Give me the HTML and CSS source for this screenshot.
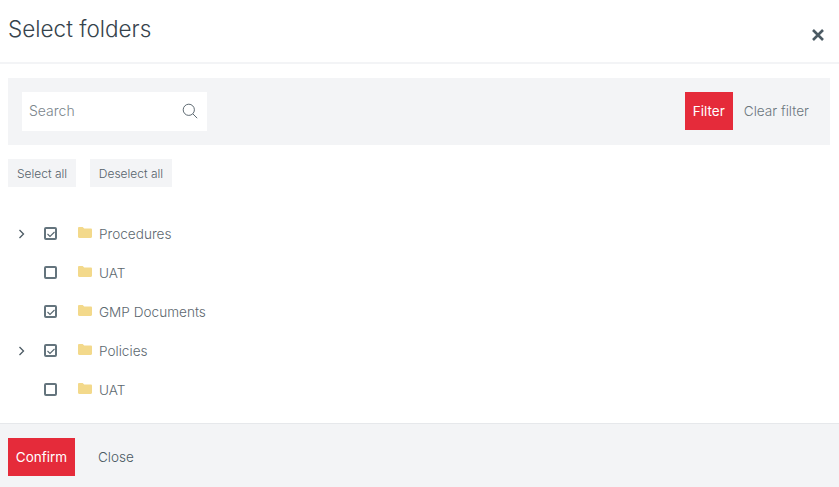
FILE: index.html
```html
<!DOCTYPE html>
<html lang="en">
<head>
    <meta charset="UTF-8">
    <meta name="viewport" content="width=device-width, initial-scale=1.0">
    <title>Select folders</title>
    <link rel="stylesheet" href="styles.css">
</head>
<body>
    <div class="modal">
        <header class="modal-header">
            <h2 class="modal-title">Select folders</h2>
            <button class="close-x" aria-label="Close">
                <svg width="12" height="12" viewBox="0 0 12 12"><path d="M1 1l10 10M11 1L1 11" stroke="#4b5a63" stroke-width="2.6" fill="none"/></svg>
            </button>
        </header>

        <div class="filter-bar">
            <div class="search-box">
                <span class="search-text">Search</span>
                <svg width="16" height="16" viewBox="0 0 16 16" fill="none" stroke="#5f6b73" stroke-width="1"><circle cx="6.8" cy="6.8" r="5.6"/><path d="M10.9 10.9l4.3 4.3"/></svg>
            </div>
            <div class="filter-actions">
                <button class="button red filter-btn">Filter</button>
                <button class="button plain clear-btn">Clear filter</button>
            </div>
        </div>

        <div class="select-buttons">
            <button class="small-btn select-btn">Select all</button>
            <button class="small-btn deselect-btn">Deselect all</button>
        </div>

        <ul class="tree">
            <li class="tree-row">
                <span class="arrow"><svg width="8" height="10" viewBox="0 0 8 10"><path d="M1.5 1l4 4-4 4" stroke="#4b5a63" stroke-width="1.3" fill="none"/></svg></span>
                <span class="check"><svg width="12" height="12" viewBox="0 0 12 12"><path d="M2.5 6l2.500 2.500 4.500-4.500" stroke="#56666f" stroke-width="1.1" fill="none"/></svg></span>
                <svg class="folder" width="14" height="11" viewBox="0 0 14 11"><path d="M0 1.2C0 .5.5 0 1.2 0h3.5l1.5 1.5h6.6c.7 0 1.2.5 1.2 1.2v7.1c0 .7-.5 1.2-1.2 1.2H1.2C.5 11 0 10.500 0 9.800z" fill="#f3d98b"/></svg>
                <span class="label">Procedures</span>
            </li>
            <li class="tree-row">
                <span class="arrow"></span>
                <span class="check"></span>
                <svg class="folder" width="14" height="11" viewBox="0 0 14 11"><path d="M0 1.2C0 .5.5 0 1.2 0h3.5l1.5 1.5h6.6c.7 0 1.2.5 1.2 1.2v7.1c0 .7-.5 1.2-1.2 1.2H1.2C.5 11 0 10.500 0 9.800z" fill="#f3d98b"/></svg>
                <span class="label">UAT</span>
            </li>
            <li class="tree-row">
                <span class="arrow"></span>
                <span class="check"><svg width="12" height="12" viewBox="0 0 12 12"><path d="M2.5 6l2.500 2.500 4.500-4.500" stroke="#56666f" stroke-width="1.1" fill="none"/></svg></span>
                <svg class="folder" width="14" height="11" viewBox="0 0 14 11"><path d="M0 1.2C0 .5.5 0 1.2 0h3.5l1.5 1.5h6.6c.7 0 1.2.5 1.2 1.2v7.1c0 .7-.5 1.2-1.2 1.2H1.2C.5 11 0 10.500 0 9.800z" fill="#f3d98b"/></svg>
                <span class="label">GMP Documents</span>
            </li>
            <li class="tree-row">
                <span class="arrow"><svg width="8" height="10" viewBox="0 0 8 10"><path d="M1.5 1l4 4-4 4" stroke="#4b5a63" stroke-width="1.3" fill="none"/></svg></span>
                <span class="check"><svg width="12" height="12" viewBox="0 0 12 12"><path d="M2.5 6l2.500 2.500 4.500-4.500" stroke="#56666f" stroke-width="1.1" fill="none"/></svg></span>
                <svg class="folder" width="14" height="11" viewBox="0 0 14 11"><path d="M0 1.2C0 .5.5 0 1.2 0h3.5l1.5 1.5h6.6c.7 0 1.2.5 1.2 1.2v7.1c0 .7-.5 1.2-1.2 1.2H1.2C.5 11 0 10.500 0 9.800z" fill="#f3d98b"/></svg>
                <span class="label">Policies</span>
            </li>
            <li class="tree-row">
                <span class="arrow"></span>
                <span class="check"></span>
                <svg class="folder" width="14" height="11" viewBox="0 0 14 11"><path d="M0 1.2C0 .5.5 0 1.2 0h3.5l1.5 1.5h6.6c.7 0 1.2.5 1.2 1.2v7.1c0 .7-.5 1.2-1.2 1.2H1.2C.5 11 0 10.500 0 9.800z" fill="#f3d98b"/></svg>
                <span class="label">UAT</span>
            </li>
        </ul>

        <footer class="modal-footer">
            <button class="button red confirm-btn">Confirm</button>
            <button class="button plain close-btn">Close</button>
        </footer>
    </div>
</body>
</html>
```

FILE: styles.css
```css
* {
    box-sizing: border-box;
}

html, body {
    height: 100%;
}

body {
    font-family: "Inter", "Liberation Sans", sans-serif;
    font-weight: 300;
    margin: 0;
    background-color: white;
    color: #4b5a63;
    overflow: hidden;
}

button {
    font-family: inherit;
    font-weight: inherit;
    border: none;
    cursor: pointer;
}

.modal {
    height: 487px;
    display: flex;
    flex-direction: column;
}

.modal-header {
    height: 64px;
    padding: 0 15px 0 8px;
    display: flex;
    justify-content: space-between;
    border-bottom: 2px solid #f3f4f6;
}

.modal-title {
    margin: 15px 0 0;
    font-size: 22.5px;
    line-height: 28px;
    font-weight: 300;
    color: #36434c;
}

.close-x {
    background: none;
    padding: 0;
    margin-top: 29px;
    height: 12px;
    display: flex;
}

.filter-bar {
    margin: 14px 9px 0 8px;
    height: 67px;
    padding: 14px 21px 14px 14px;
    background-color: #f3f4f6;
    display: flex;
    justify-content: space-between;
    align-items: flex-start;
}

.search-box {
    width: 185px;
    height: 39px;
    padding: 0 9px 2px 7px;
    background-color: white;
    display: flex;
    align-items: center;
    justify-content: space-between;
}

.search-text {
    font-size: 14px;
    color: #7b858c;
}

.filter-actions {
    display: flex;
    align-items: center;
    gap: 11px;
}

.button {
    font-size: 13.5px;
    padding: 0;
}

.red {
    background-color: #e52b3a;
    color: white;
    font-weight: 400;
}

.plain {
    background: none;
    color: #6b767d;
}

.filter-btn {
    width: 48px;
    height: 38px;
}

.clear-btn {
    font-size: 13.6px;
}

.select-buttons {
    margin: 14px 0 0 8px;
    display: flex;
    gap: 14px;
}

.small-btn {
    height: 28px;
    padding: 0;
    font-size: 12px;
    color: #56626a;
    background-color: #f3f4f6;
}

.select-btn {
    width: 68px;
}

.deselect-btn {
    width: 82px;
}

.tree {
    list-style: none;
    margin: 27px 0 0;
    padding: 0;
    flex: 1;
}

.tree-row {
    height: 39px;
    display: flex;
    align-items: center;
    font-size: 13.6px;
    color: #5d686f;
}

.arrow {
    width: 8px;
    height: 10px;
    margin-left: 18px;
    display: flex;
}

.check {
    width: 13px;
    height: 13px;
    margin-left: 18px;
    border: 2px solid #64747d;
    border-radius: 2px;
    display: flex;
    align-items: center;
    justify-content: center;
}

.check svg {
    flex: none;
}

.folder {
    margin-left: 21px;
    margin-top: -3px;
}

.label {
    margin-left: 7px;
}

.modal-footer {
    height: 64px;
    padding: 14px 8px 11px;
    background-color: #f3f4f6;
    border-top: 1px solid #e6e8eb;
    display: flex;
    align-items: center;
    gap: 23px;
}

.confirm-btn {
    width: 67px;
    height: 38px;
}

.close-btn {
    color: #4b5a63;
}
```
